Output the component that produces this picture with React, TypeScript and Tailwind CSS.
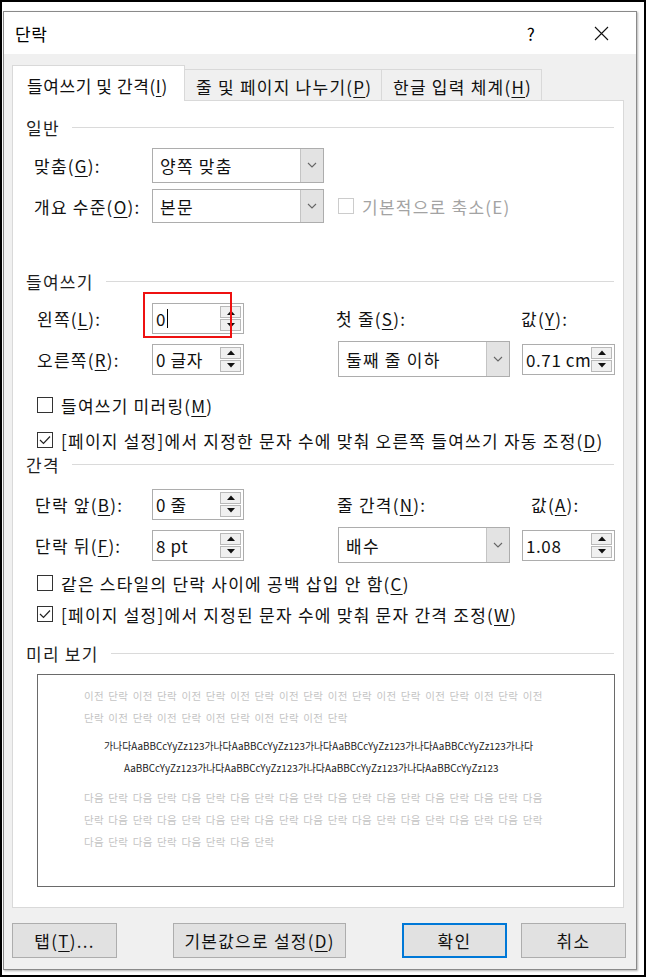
import React from "react";

const FONT = "font-['Noto_Sans_CJK_KR','Noto_Sans',sans-serif]";

function U({ c }: { c: string }) {
  return <span className="underline underline-offset-[3px] decoration-1">{c}</span>;
}

function Section({ title }: { title: string }) {
  return (
    <div className="flex h-[20px] items-center pl-[13px] pr-[9px] text-[17px] text-[#1e1e1e]">
      <span className="leading-none">{title}</span>
      <div className="ml-[12px] h-px flex-1 bg-[#dadada]" />
    </div>
  );
}

function Tri({ up }: { up: boolean }) {
  return (
    <svg width="8" height="5" viewBox="0 0 8 5">
      {up ? <path d="M0 5 L4 0.5 L8 5 Z" fill="#111" /> : <path d="M0 0 L4 4.5 L8 0 Z" fill="#111" />}
    </svg>
  );
}

function Spin({ value, w = 92, cursor = false }: { value: string; w?: number; cursor?: boolean }) {
  return (
    <div
      className="flex h-[31px] shrink-0 items-stretch border border-[#adadad] bg-white"
      style={{ width: w }}
    >
      <div className="flex flex-1 items-center overflow-hidden whitespace-nowrap pl-[3px] text-[17px] leading-none tracking-[0.6px] text-[#111]">
        {value}
        {cursor && <span className="ml-px inline-block h-[19px] w-px bg-black" />}
      </div>
      <div className="my-[2px] mr-[2px] flex w-[21px] flex-col gap-px">
        <div className="flex flex-1 items-center justify-center border border-[#b9b9b9] bg-[#f0f0f0]">
          <Tri up />
        </div>
        <div className="flex flex-1 items-center justify-center border border-[#b9b9b9] bg-[#f0f0f0]">
          <Tri up={false} />
        </div>
      </div>
    </div>
  );
}

function Combo({ value, h = 35 }: { value: string; h?: number }) {
  return (
    <div
      className="flex w-[172px] shrink-0 items-stretch border border-[#adadad] bg-white"
      style={{ height: h }}
    >
      <div className="flex flex-1 items-center whitespace-nowrap pl-[7px] text-[17px] leading-none text-[#111]">{value}</div>
      <div className="flex w-[23px] items-center justify-center border-l border-[#c4c4c4] bg-[#e3e3e3]">
        <svg width="10" height="6" viewBox="0 0 10 6">
          <path d="M1 1 L5 5 L9 1" fill="none" stroke="#666" strokeWidth="1.1" />
        </svg>
      </div>
    </div>
  );
}

function Check({ checked, children, disabled = false }: { checked: boolean; children: React.ReactNode; disabled?: boolean }) {
  return (
    <div className="flex items-center">
      <div
        className={
          "flex h-[16px] w-[16px] shrink-0 items-center justify-center border bg-white " +
          (disabled ? "border-[#cccccc]" : "border-[#333333]")
        }
      >
        {checked && (
          <svg width="12" height="10" viewBox="0 0 12 10">
            <path d="M1 5 L4.5 8.5 L11 1.5" fill="none" stroke="#222" strokeWidth="1.2" />
          </svg>
        )}
      </div>
      <span
        className={
          "ml-[8px] whitespace-nowrap text-[17px] leading-none " + (disabled ? "text-[#a3a3a3]" : "text-[#111]")
        }
      >
        {children}
      </span>
    </div>
  );
}

function Btn({ w, children, primary = false }: { w: number; children: React.ReactNode; primary?: boolean }) {
  return (
    <div
      className={
        "flex h-[35px] shrink-0 items-center justify-center bg-[#e1e1e1] text-[17px] leading-none text-[#111] " +
        (primary ? "border-2 border-[#0078d7]" : "border border-[#adadad]")
      }
      style={{ width: w }}
    >
      {children}
    </div>
  );
}

const GRAY = "ml-[46px] flex h-[22px] items-center whitespace-nowrap text-[10.5px] leading-none tracking-[0.3px] text-[#c4c4c4] [word-spacing:1.8px]";
const DARK = "flex h-[22px] items-center whitespace-nowrap text-[9.9px] leading-none tracking-normal text-[#222]";

export default function App() {
  const prev1 = Array(9).fill("이전 단락").join(" ") + " 이전";
  const prev2 = "단락 " + Array(5).fill("이전 단락").join(" ");
  const s = "AaBBCcYyZz123";
  const main1 = `가나다${s}가나다${s}가나다${s}가나다${s}가나다`;
  const main2 = `${s}가나다${s}가나다${s}가나다${s}`;
  const next1 = Array(9).fill("다음 단락").join(" ") + " 다음";
  const next2 = "단락 " + Array(9).fill("다음 단락").join(" ");
  const next3 = "다음 단락 다음 단락 다음 단락 다음 단락";

  return (
    <div className={"h-[977px] w-[646px] border-2 border-black bg-white pl-px pt-[9px] tracking-[1.25px] " + FONT}>
      <div className="flex h-[959px] w-[634px] flex-col border border-[#8a8a8a] bg-[#f0f0f0] shadow-[1px_1px_2px_rgba(0,0,0,0.3)]">
        {/* title bar */}
        <div className="flex h-[42px] items-center bg-white pl-[11px] text-[17px] text-black">
          <span className="leading-none tracking-[0.5px]">단락</span>
          <div className="flex-1" />
          <span className="mr-[58px] leading-none">?</span>
          <svg width="15" height="15" viewBox="0 0 15 15" className="mr-[27px]">
            <path d="M1 1 L14 14 M14 1 L1 14" stroke="#111" strokeWidth="1.1" />
          </svg>
        </div>

        {/* body */}
        <div className="flex flex-1 flex-col pl-[8px] pt-[11px]">
          {/* tabs */}
          <div className="relative z-10 flex h-[35px] items-end text-[17px] leading-none text-[#111]">
            <div className="flex h-[36px] w-[173px] translate-y-px items-center whitespace-nowrap border-x border-t border-[#d9d9d9] bg-white pl-[14px] pt-[4px] tracking-[0.6px]">
              들여쓰기 및 간격(<U c="I" />)
            </div>
            <div className="flex h-[31px] w-[197px] items-center whitespace-nowrap border-r border-t border-[#d9d9d9] bg-[#f0f0f0] pl-[11px] pt-[2px]">
              줄 및 페이지 나누기(<U c="P" />)
            </div>
            <div className="flex h-[31px] w-[160px] items-center whitespace-nowrap border-r border-t border-[#d9d9d9] bg-[#f0f0f0] pl-[11px] pt-[2px]">
              한글 입력 체계(<U c="H" />)
            </div>
          </div>

          {/* panel */}
          <div className="flex h-[808px] w-[612px] flex-col border border-[#d9d9d9] bg-white pt-[16px] text-[17px] text-[#111]">
            <Section title="일반" />

            <div className="mt-[11px] flex h-[34px] items-center pl-[21px]">
              <div className="w-[118px] whitespace-nowrap leading-none">
                맞춤(<U c="G" />):
              </div>
              <Combo value="양쪽 맞춤" h={35} />
            </div>

            <div className="mt-[7px] flex h-[34px] items-center pl-[21px]">
              <div className="w-[118px] whitespace-nowrap leading-none">
                개요 수준(<U c="O" />):
              </div>
              <Combo value="본문" h={34} />
              <div className="ml-[14px]">
                <Check checked={false} disabled>
                  기본적으로 축소(E)
                </Check>
              </div>
            </div>

            <div className="mt-[48px]">
              <Section title="들여쓰기" />
            </div>

            <div className="mt-[12px] flex h-[31px] items-center pl-[24px]">
              <div className="w-[115px] whitespace-nowrap leading-none">
                왼쪽(<U c="L" />):
              </div>
              <div className="relative">
                <Spin value="0" cursor />
                <div className="absolute left-[-9px] top-[-11px] h-[46px] w-[89px] border-2 border-[#ee1111]" />
              </div>
              <div className="ml-[92px] w-[185px] whitespace-nowrap leading-none">
                첫 줄(<U c="S" />):
              </div>
              <div className="whitespace-nowrap leading-none">
                값(<U c="Y" />):
              </div>
            </div>

            <div className="mt-[7px] flex h-[36px] items-center pl-[24px]">
              <div className="w-[115px] whitespace-nowrap leading-none">
                오른쪽(<U c="R" />):
              </div>
              <Spin value="0 글자" />
              <div className="ml-[94px]">
                <Combo value="둘째 줄 이하" h={36} />
              </div>
              <div className="ml-[12px]">
                <Spin value="0.71 cm" w={93} />
              </div>
            </div>

            <div className="mt-[18px] flex h-[20px] items-center pl-[24px]">
              <Check checked={false}>
                들여쓰기 미러링(<U c="M" />)
              </Check>
            </div>
            <div className="mt-[15px] flex h-[20px] items-center pl-[24px]">
              <Check checked>
                [페이지 설정]에서 지정한 문자 수에 맞춰 오른쪽 들여쓰기 자동 조정(<U c="D" />)
              </Check>
            </div>

            <div className="mt-[4px]">
              <Section title="간격" />
            </div>

            <div className="mt-[14px] flex h-[32px] items-center pl-[22px]">
              <div className="w-[117px] whitespace-nowrap leading-none">
                단락 앞(<U c="B" />):
              </div>
              <Spin value="0 줄" />
              <div className="ml-[93px] w-[194px] whitespace-nowrap leading-none">
                줄 간격(<U c="N" />):
              </div>
              <div className="whitespace-nowrap leading-none">
                값(<U c="A" />):
              </div>
            </div>

            <div className="mt-[7px] flex h-[36px] items-center pl-[22px]">
              <div className="w-[117px] whitespace-nowrap leading-none">
                단락 뒤(<U c="F" />):
              </div>
              <Spin value="8 pt" />
              <div className="ml-[94px]">
                <Combo value="배수" h={36} />
              </div>
              <div className="ml-[12px]">
                <Spin value="1.08" w={93} />
              </div>
            </div>

            <div className="mt-[10px] flex h-[20px] items-center pl-[24px]">
              <Check checked={false}>
                같은 스타일의 단락 사이에 공백 삽입 안 함(<U c="C" />)
              </Check>
            </div>
            <div className="mt-[11px] flex h-[20px] items-center pl-[24px]">
              <Check checked>
                [페이지 설정]에서 지정된 문자 수에 맞춰 문자 간격 조정(<U c="W" />)
              </Check>
            </div>

            <div className="mt-[19px]">
              <Section title="미리 보기" />
            </div>

            <div className="ml-[24px] mt-[11px] flex h-[213px] w-[578px] flex-col border border-[#6a6a6a] bg-white pt-[10px]">
              <div className={GRAY}>{prev1}</div>
              <div className={GRAY}>{prev2}</div>
              <div className={"ml-[66px] mt-[7px] " + DARK}>{main1}</div>
              <div className={"ml-[86px] " + DARK}>{main2}</div>
              <div className={"mt-[7px] " + GRAY}>{next1}</div>
              <div className={GRAY}>{next2}</div>
              <div className={GRAY}>{next3}</div>
            </div>
          </div>

          {/* buttons */}
          <div className="mt-[15px] flex items-center">
            <Btn w={105}>
              탭(<U c="T" />)...
            </Btn>
            <div className="ml-[56px]">
              <Btn w={173}>
                기본값으로 설정(<U c="D" />)
              </Btn>
            </div>
            <div className="ml-[56px]">
              <Btn w={105} primary>
                확인
              </Btn>
            </div>
            <div className="ml-[14px]">
              <Btn w={105}>취소</Btn>
            </div>
          </div>
        </div>
      </div>
    </div>
  );
}
